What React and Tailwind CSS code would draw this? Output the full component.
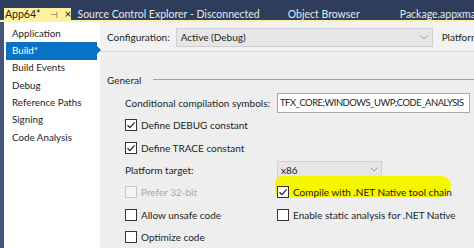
import React from "react";

const font = { fontFamily: 'Lato, "Noto Sans", sans-serif' };

const navItems = [
  "Application",
  "Build*",
  "Build Events",
  "Debug",
  "Reference Paths",
  "Signing",
  "Code Analysis",
];

const Check = ({ checked, disabled }) => (
  <span
    className={`w-[12px] h-[12px] shrink-0 border flex items-center justify-center ${
      disabled ? "border-[#c8c8c8] bg-[#f4f4f4]" : "border-[#333] bg-white"
    }`}
  >
    {checked && (
      <svg width="10" height="10" viewBox="0 0 10 10">
        <path d="M1.5 5.2 L4 7.6 L8.6 2.4" fill="none" stroke="#222" strokeWidth="1.2" />
      </svg>
    )}
  </span>
);

const CheckRow = ({ label, checked, disabled }) => (
  <div className="flex items-center gap-[4px]">
    <Check checked={checked} disabled={disabled} />
    <span className={disabled ? "text-[#a8a8a8]" : "text-[#1e1e1e]"}>{label}</span>
  </div>
);

const Chevron = () => (
  <svg width="8" height="5" viewBox="0 0 8 5">
    <path d="M0.5 0.5 L4 4 L7.5 0.5" fill="none" stroke="#999" strokeWidth="1" />
  </svg>
);

export default function App() {
  return (
    <div
      className="w-[474px] h-[248px] overflow-hidden bg-[#2e3d5c] flex flex-col text-[10px] leading-none whitespace-nowrap"
      style={font}
    >
      {/* ===== TABS ===== */}
      <div className="h-[20px] flex items-end shrink-0 text-[10.5px]">
        <div className="ml-[4px] w-[68px] h-[12px] bg-[#fff29d] flex items-center pl-[1px] text-[#1e1e1e]">
          <span>App64*</span>
          <span className="ml-[9px] text-[9px] text-[#555]">⊣</span>
          <span className="ml-[7px] text-[12px]">×</span>
        </div>
        <div className="h-[12px] flex items-center text-[#e3e8f2]">
          <span className="ml-[6px]">Source Control Explorer - Disconnected</span>
          <span className="ml-[28px]">Object Browser</span>
          <span className="ml-[40px]">Package.appxmanifest</span>
        </div>
      </div>
      <div className="h-[2px] bg-[#fff29d] shrink-0" />

      {/* ===== BODY ===== */}
      <div className="flex flex-1 min-h-0">
        <div className="w-[4px] bg-[#44547c] shrink-0" />
        <div className="w-[96px] bg-white shrink-0 pt-[3px] pl-[2px] text-[9.8px]">
          {navItems.map((item) => (
            <div
              key={item}
              className={`relative h-[17.3px] flex items-center pl-[6px] ${
                item === "Build*" ? "bg-[#0a72c4] text-white w-[91px]" : "text-[#1e1e1e]"
              }`}
            >
              {item}
              {item === "Build*" && (
                <span className="absolute right-[-4px] top-[4px] w-0 h-0 border-y-[4px] border-y-transparent border-l-[4px] border-l-[#0a72c4]" />
              )}
            </div>
          ))}
        </div>

        <div className="flex-1 bg-[#eeeeee] text-[#1e1e1e] flex flex-col">
          {/* Configuration */}
          <div className="h-[30px] bg-[#f2f2f2] border-b border-[#d8d8d8] flex items-center pl-[7px] pt-[1px] shrink-0">
            <span>Configuration:</span>
            <div className="ml-[6px] w-[257px] h-[19px] shrink-0 bg-[#e6e6e6] border border-[#cfcfcf] flex items-center px-[4px] justify-between">
              <span>Active (Debug)</span>
              <Chevron />
            </div>
            <span className="ml-[9px]">Platform</span>
          </div>

          {/* General */}
          <div className="h-[38px] flex items-end pl-[7px]">
            <span>General</span>
            <div className="flex-1 h-[1px] bg-[#a0a0a0] ml-[12px] mb-[5px]" />
          </div>

          <div className="pl-[25px] grid grid-cols-[152px_1fr] auto-rows-[22.3px] items-center mt-[7px]">
            <span>Conditional compilation symbols:</span>
            <div className="w-[193px] h-[20px] bg-white border border-[#a8a8a8] flex items-center px-[2px] overflow-hidden text-[9.4px] tracking-[-0.45px]">
              TFX_CORE;WINDOWS_UWP;CODE_ANALYSIS
            </div>

            <CheckRow label="Define DEBUG constant" checked />
            <span />

            <CheckRow label="Define TRACE constant" checked />
            <span />

            <span>Platform target:</span>
            <div className="w-[105px] h-[18px] bg-[#e6e6e6] border border-[#d0d0d0] flex items-center px-[3px] justify-between">
              <span>x86</span>
              <Chevron />
            </div>

            <CheckRow label="Prefer 32-bit" disabled />
            <div className="relative">
              <span className="absolute left-[-2px] top-[-10px] w-[176px] h-[21px] bg-[#f6f600] rounded-[8px_10px_12px_6px]" />
              <div className="relative">
                <CheckRow label="Compile with .NET Native tool chain" checked />
              </div>
            </div>

            <CheckRow label="Allow unsafe code" />
            <CheckRow label="Enable static analysis for .NET Native" />

            <CheckRow label="Optimize code" />
            <span />
          </div>
        </div>
      </div>
    </div>
  );
}
